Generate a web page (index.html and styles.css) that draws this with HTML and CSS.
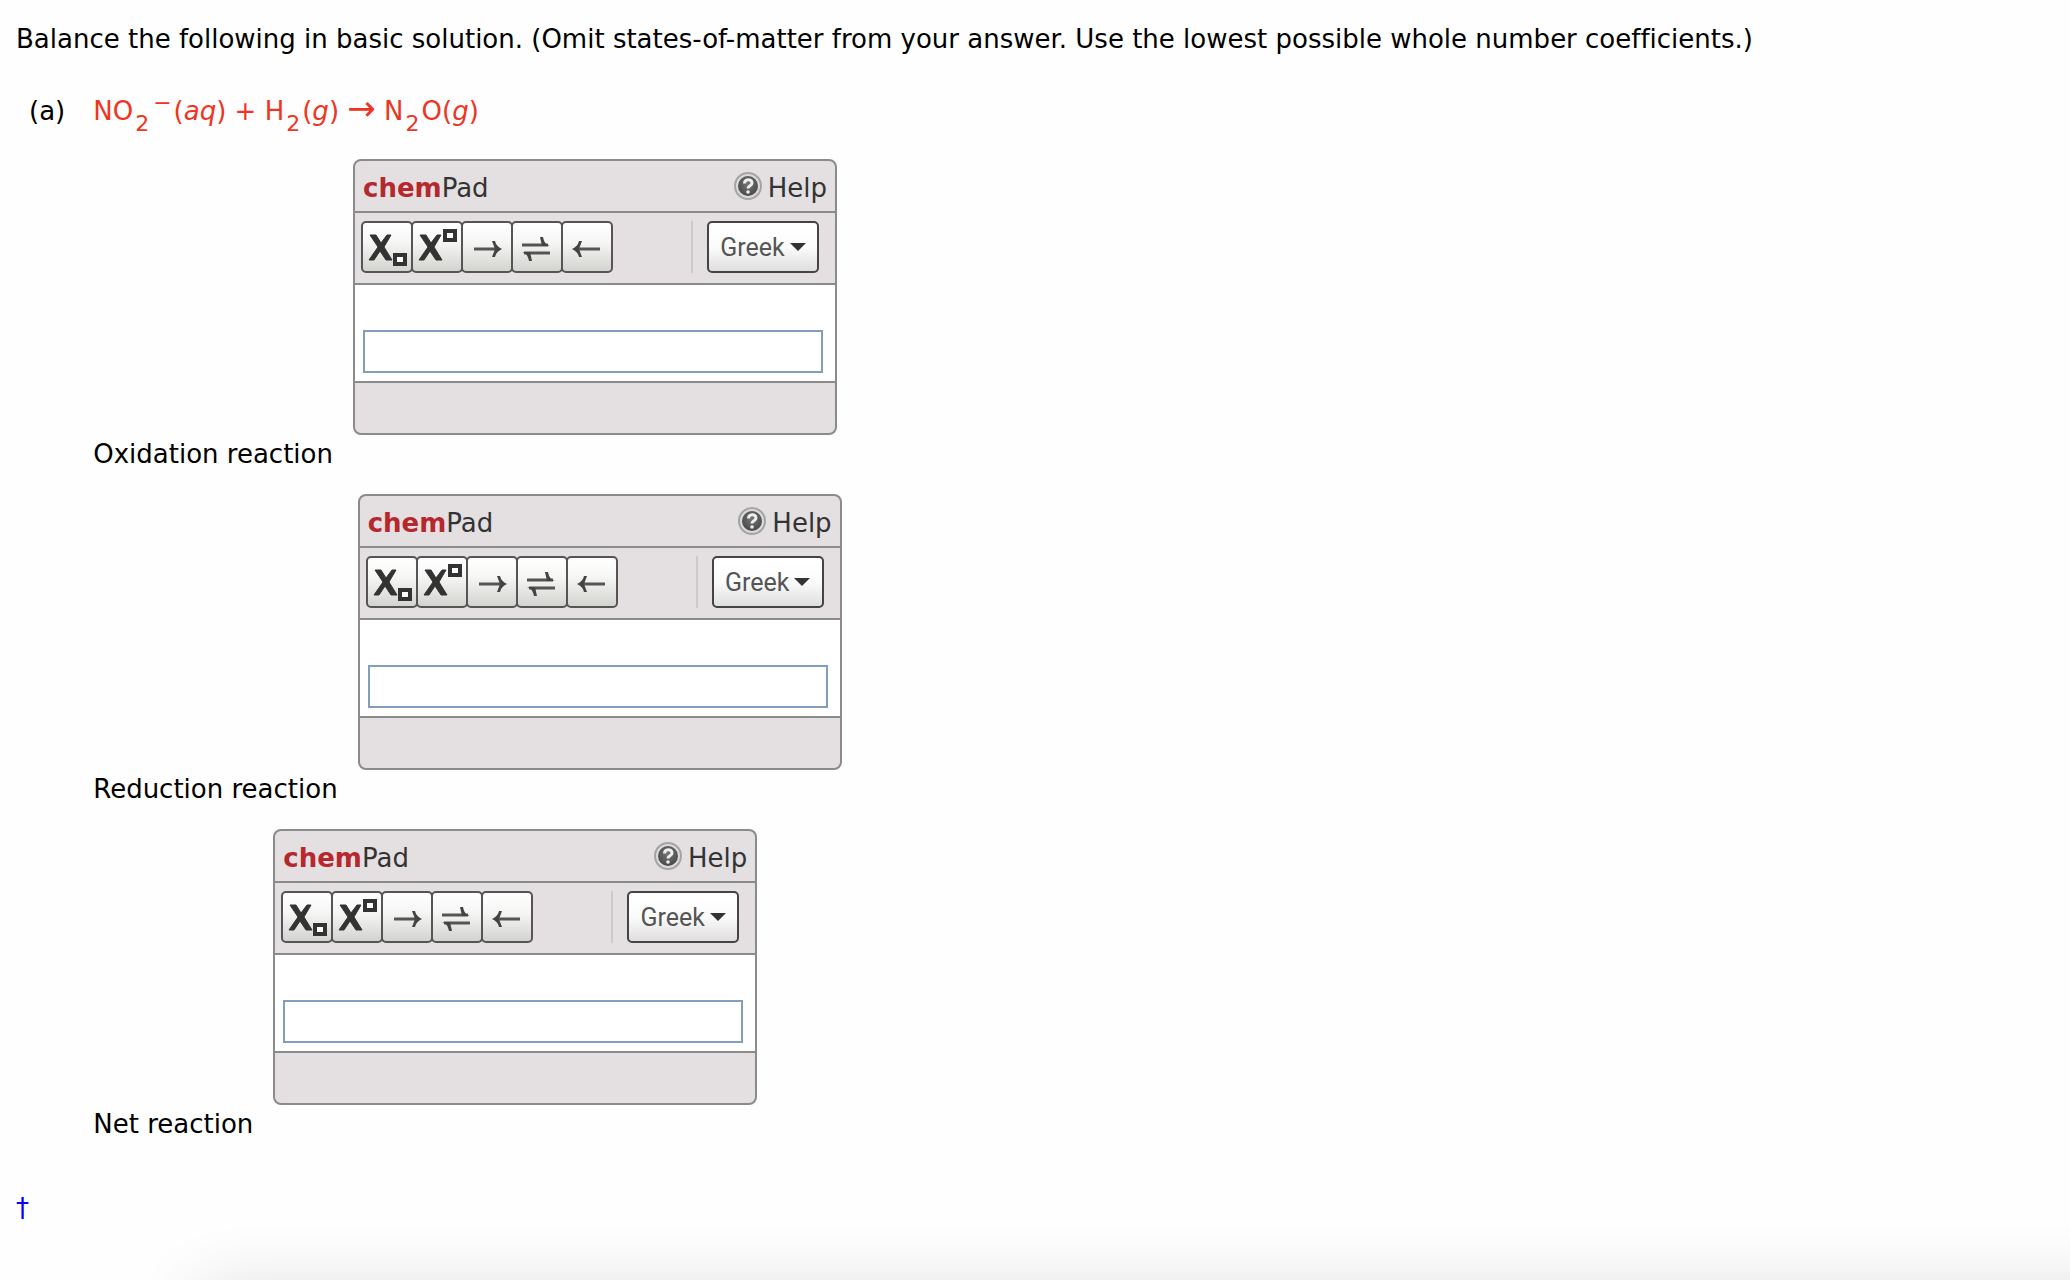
FILE: index.html
```html
<!DOCTYPE html>
<html lang="en">
<head>
<meta charset="utf-8">
<title>Balance the following in basic solution</title>
<link rel="stylesheet" href="styles.css">
</head>
<body>
<svg class="sprite" aria-hidden="true">
  <defs>
    <radialGradient id="help-fill" cx="50%" cy="40%" r="60%">
      <stop offset="0" stop-color="#777"/>
      <stop offset="1" stop-color="#484848"/>
    </radialGradient>
    <symbol id="sub" viewBox="0 0 48 48">
      <path d="M7 12h6l5 8 6-8h4l-7 12 8 13h-6l-6-9-6 9H6l9-13z" fill="#333" stroke="#333"/>
      <path d="M32 32h10v9H32z" fill="#fff" stroke="#333" stroke-width="4"/>
    </symbol>
    <symbol id="sup" viewBox="0 0 48 48">
      <path d="M7 12h6l5 8 6-8h4l-7 12 8 13h-6l-6-9-6 9H6l9-13z" fill="#333" stroke="#333"/>
      <path d="M32 8h10v9H32z" fill="#fff" stroke="#333" stroke-width="4"/>
    </symbol>
    <symbol id="right" viewBox="0 0 48 48">
      <path d="M11 26h24" fill="none" stroke="#555" stroke-width="3"/>
      <path d="M29 18h3c1 4 3 6 7 8-4 2-6 4-7 8h-3l3-8z" fill="#444"/>
    </symbol>
    <symbol id="both" viewBox="0 0 48 48">
      <path d="M9 22h26M37 30H11" fill="none" stroke="#555" stroke-width="3"/>
      <path d="M27 14h3c1 5 3 8 7 9h-8zM19 38h-3c-1-5-3-8-7-9h8z" fill="#444"/>
    </symbol>
    <symbol id="left" viewBox="0 0 48 48">
      <path d="M37 26H13" fill="none" stroke="#555" stroke-width="3"/>
      <path d="M19 18h-3c-1 4-3 6-7 8 4 2 6 4 7 8h3l-3-8z" fill="#444"/>
    </symbol>
    <symbol id="help" viewBox="0 0 28 28">
      <circle cx="14" cy="14" r="13" fill="#dadada" stroke="#a4a4a4" stroke-width="2"/>
      <circle cx="14" cy="14" r="10" fill="url(#help-fill)"/>
      <path d="M10.500 11.500c0-5 7.500-5 7.500-.5 0 3-4 2.500-4 5.500" fill="none" stroke="#eee" stroke-width="3"/>
      <circle cx="14" cy="20" r="1.800" fill="#eee"/>
    </symbol>
  </defs>
</svg>
<main class="question">
  <p class="prompt">Balance the following in basic solution. (Omit states-of-matter from your answer. Use the lowest possible whole number coefficients.)</p>
  <section class="part">
    <div class="part-label">(a)</div>
    <div class="part-body">
      <div class="equation">NO<sub>2</sub><sup>−</sup>(<i>aq</i>) + H<sub>2</sub>(<i>g</i>) <span class="yields">→</span> N<sub>2</sub>O(<i>g</i>)</div>
      <div class="answer">
        <label class="answer-label" for="oxidation">Oxidation reaction</label>
        <div class="pad">
          <div class="pad-head"><span><b class="brand">chem</b>Pad</span><a class="help" href="#help"><svg class="help-icon"><use href="#help"/></svg>Help</a></div>
          <div class="pad-tools">
            <div class="tool-group">
              <button class="tool" type="button" aria-label="Subscript"><svg><use href="#sub"/></svg></button>
              <button class="tool" type="button" aria-label="Superscript"><svg><use href="#sup"/></svg></button>
              <button class="tool" type="button" aria-label="Right arrow"><svg><use href="#right"/></svg></button>
              <button class="tool" type="button" aria-label="Equilibrium"><svg><use href="#both"/></svg></button>
              <button class="tool" type="button" aria-label="Left arrow"><svg><use href="#left"/></svg></button>
            </div>
            <div class="greek-group"><button class="greek" type="button">Greek<span class="caret"></span></button></div>
          </div>
          <div class="pad-entry"><input class="entry" id="oxidation" type="text"></div>
          <div class="pad-foot"></div>
        </div>
      </div>
      <div class="answer">
        <label class="answer-label" for="reduction">Reduction reaction</label>
        <div class="pad">
          <div class="pad-head"><span><b class="brand">chem</b>Pad</span><a class="help" href="#help"><svg class="help-icon"><use href="#help"/></svg>Help</a></div>
          <div class="pad-tools">
            <div class="tool-group">
              <button class="tool" type="button" aria-label="Subscript"><svg><use href="#sub"/></svg></button>
              <button class="tool" type="button" aria-label="Superscript"><svg><use href="#sup"/></svg></button>
              <button class="tool" type="button" aria-label="Right arrow"><svg><use href="#right"/></svg></button>
              <button class="tool" type="button" aria-label="Equilibrium"><svg><use href="#both"/></svg></button>
              <button class="tool" type="button" aria-label="Left arrow"><svg><use href="#left"/></svg></button>
            </div>
            <div class="greek-group"><button class="greek" type="button">Greek<span class="caret"></span></button></div>
          </div>
          <div class="pad-entry"><input class="entry" id="reduction" type="text"></div>
          <div class="pad-foot"></div>
        </div>
      </div>
      <div class="answer">
        <label class="answer-label" for="net">Net reaction</label>
        <div class="pad">
          <div class="pad-head"><span><b class="brand">chem</b>Pad</span><a class="help" href="#help"><svg class="help-icon"><use href="#help"/></svg>Help</a></div>
          <div class="pad-tools">
            <div class="tool-group">
              <button class="tool" type="button" aria-label="Subscript"><svg><use href="#sub"/></svg></button>
              <button class="tool" type="button" aria-label="Superscript"><svg><use href="#sup"/></svg></button>
              <button class="tool" type="button" aria-label="Right arrow"><svg><use href="#right"/></svg></button>
              <button class="tool" type="button" aria-label="Equilibrium"><svg><use href="#both"/></svg></button>
              <button class="tool" type="button" aria-label="Left arrow"><svg><use href="#left"/></svg></button>
            </div>
            <div class="greek-group"><button class="greek" type="button">Greek<span class="caret"></span></button></div>
          </div>
          <div class="pad-entry"><input class="entry" id="net" type="text"></div>
          <div class="pad-foot"></div>
        </div>
      </div>
    </div>
  </section>
  <a class="footnote" href="#note">†</a>
</main>
<div class="dock-shadow"></div>
</body>
</html>
```

FILE: styles.css
```css
* { box-sizing: border-box; }

body {
  margin: 0;
  background: #fefefe;
  color: #000;
  font-family: Verdana, "DejaVu Sans", sans-serif;
  font-size: 26px;
  font-variant-ligatures: none;
  line-height: 32px;
}

.sprite { position: absolute; width: 0; height: 0; }

.question { padding: 23px 16px; }

.prompt { margin: 0; }

.part {
  display: flex;
  gap: 28px;
  margin-top: 40px;
  padding-left: 13px;
}

.equation {
  height: 64px;
  color: #ee3524;
}

.equation sub,
.equation sup {
  margin: 0 2px;
  font-size: 22px;
  line-height: 0;
}

.equation sub { vertical-align: -11px; }

.yields { font-size: 34px; line-height: 0; }

.answer {
  display: flex;
  align-items: flex-end;
  gap: 20px;
  margin-bottom: 24px;
}

.pad {
  width: 484px;
  margin-bottom: 35px;
  border: 2px solid #8b8b8b;
  border-radius: 8px;
  overflow: hidden;
  background: #e4e0e1;
  color: #333;
}

.pad-head {
  display: flex;
  align-items: center;
  justify-content: space-between;
  height: 52px;
  padding: 4px 8px 0;
  border-bottom: 2px solid #8b8b8b;
}

.brand { color: #b5282e; }

.help {
  display: flex;
  align-items: center;
  gap: 6px;
  color: inherit;
  text-decoration: none;
}

.help-icon { width: 28px; height: 28px; margin-bottom: 4px; }

.pad-tools {
  display: flex;
  justify-content: space-between;
  height: 72px;
  padding: 8px 16px 10px 6px;
  border-bottom: 2px solid #8b8b8b;
}

.tool-group { display: flex; }

.tool {
  width: 52px;
  height: 52px;
  padding: 0;
  border: 2px solid #555;
  border-radius: 5px;
  background: linear-gradient(#fff, #f6f6f5 40%, #d3d4d0);
}

.tool + .tool { margin-left: -2px; }

.tool svg { display: block; width: 48px; height: 48px; }

.greek-group {
  display: flex;
  height: 52px;
  padding-left: 14px;
  border-left: 2px solid #cbc9ca;
}

.greek {
  display: flex;
  align-items: center;
  justify-content: center;
  gap: 5px;
  width: 112px;
  padding: 0;
  border: 2px solid #444;
  border-radius: 5px;
  background: linear-gradient(#fff, #fbfbfb 50%, #e0dede);
  color: #555;
  font-family: Roboto, sans-serif;
  font-size: 25px;
}

.caret {
  border: 8px solid transparent;
  border-top-color: #333;
  border-bottom: 0;
}

.pad-entry {
  height: 98px;
  padding: 45px 12px 8px 8px;
  border-bottom: 2px solid #8b8b8b;
  background: #fff;
}

.entry {
  display: block;
  width: 100%;
  height: 43px;
  padding: 0 6px;
  border: 2px solid #839dbc;
  background: #fff;
  font: inherit;
}

.pad-foot { height: 50px; }

.footnote {
  display: inline-block;
  margin-top: 28px;
  color: #00f;
  text-decoration: none;
}

.dock-shadow {
  position: fixed;
  top: 100%;
  left: 200px;
  right: -80px;
  height: 80px;
  box-shadow: 0 10px 70px rgba(0, 0, 0, 0.14);
}
```
